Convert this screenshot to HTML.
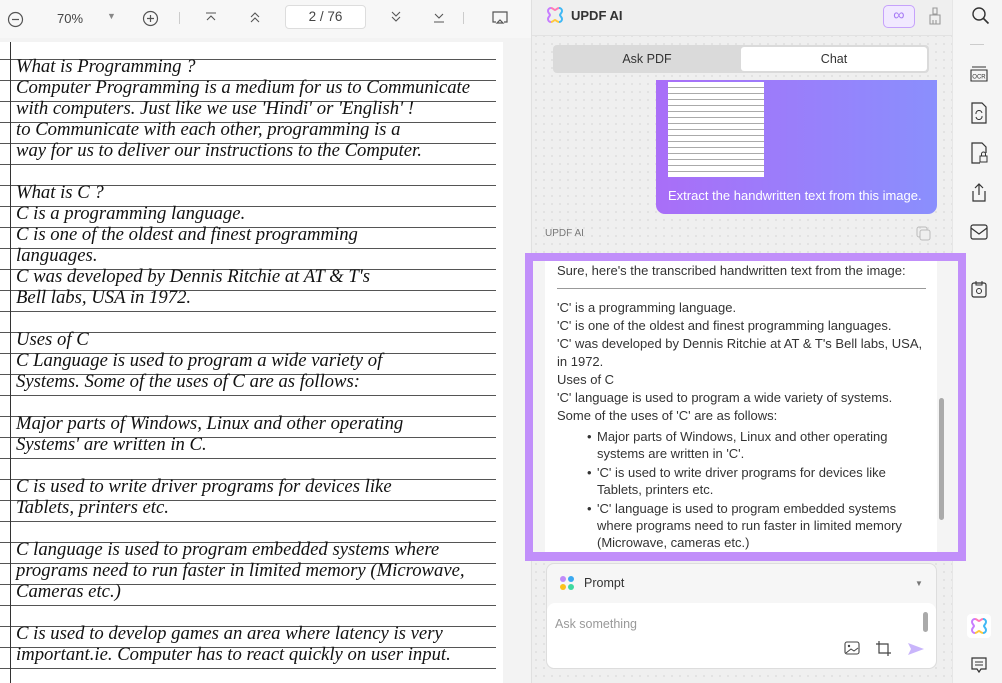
<!DOCTYPE html>
<html><head><meta charset="utf-8"><style>
*{margin:0;padding:0;box-sizing:border-box}
body{width:1002px;height:683px;overflow:hidden;position:relative;background:#f0f0f0;font-family:"Liberation Sans","Noto Sans CJK SC",sans-serif;}
.abs{position:absolute}
#left{left:0;top:0;width:531px;height:683px;background:#f3f3f3}
#tb{left:0;top:0;width:531px;height:38px;background:#f7f7f7;font-size:13px;color:#444}
#page{left:0;top:42px;width:503px;height:641px;background:#fff}
#rules{left:0;top:0;width:496px;height:641px;background-image:repeating-linear-gradient(to bottom,transparent 0,transparent 17px,#555 17px,#555 18px,transparent 18px,transparent 21px);}
#page .vl{left:10px;top:0;width:1px;height:641px;background:#333}
.hw{position:absolute;left:16px;font-family:"Liberation Serif",serif;font-style:italic;font-size:18.7px;color:#111;white-space:nowrap}
#sep{left:531px;top:0;width:1px;height:683px;background:#e0e0e0}
#right{left:532px;top:0;width:420px;height:683px;background-color:#efefef;background-image:radial-gradient(#dedede 0.8px,transparent 1px);background-size:8px 8px}
#rbar{left:952px;top:0;width:50px;height:683px;background:#f5f5f5;border-left:1px solid #e6e6e6}
.ic{position:absolute}
.resp{font-size:13px;color:#333;line-height:18px}
</style></head><body>
<div id="left" class="abs"></div>
<div id="tb" class="abs">
 <svg class="ic" style="left:7px;top:11px" width="17" height="17"><circle cx="8.5" cy="8.5" r="7" fill="none" stroke="#555" stroke-width="1.2"/><path d="M5 8.5h7" stroke="#555" stroke-width="1.2"/></svg>
 <div class="abs" style="left:57px;top:11px">70%</div>
 <div class="abs" style="left:107px;top:11px;font-size:9px;color:#888">▼</div>
 <svg class="ic" style="left:142px;top:10px" width="17" height="17"><circle cx="8.5" cy="8.5" r="7" fill="none" stroke="#555" stroke-width="1.2"/><path d="M5 8.5h7M8.5 5v7" stroke="#555" stroke-width="1.2"/></svg>
 <div class="abs" style="left:179px;top:12px;width:1px;height:12px;background:#ccc"></div>
 <svg class="ic" style="left:204px;top:11px" width="14" height="14"><path d="M2 2h10M3 9l4-4 4 4" fill="none" stroke="#555" stroke-width="1.1"/></svg>
 <svg class="ic" style="left:248px;top:10px" width="14" height="14"><path d="M3 7l4-4 4 4M3 12l4-4 4 4" fill="none" stroke="#555" stroke-width="1.1"/></svg>
 <div class="abs" style="left:285px;top:5px;width:81px;height:24px;border:1px solid #ddd;border-radius:4px;background:#fff;text-align:center;line-height:22px;font-size:13.5px">2 / 76</div>
 <svg class="ic" style="left:389px;top:10px" width="14" height="14"><path d="M3 2l4 4 4-4M3 7l4 4 4-4" fill="none" stroke="#555" stroke-width="1.1"/></svg>
 <svg class="ic" style="left:432px;top:11px" width="14" height="14"><path d="M3 3l4 4 4-4M2 11h10" fill="none" stroke="#555" stroke-width="1.1"/></svg>
 <div class="abs" style="left:463px;top:12px;width:1px;height:12px;background:#ccc"></div>
 <svg class="ic" style="left:491px;top:10px" width="18" height="16"><path d="M5 12H2V2h14v10h-3M6 13l3-3 3 3z" fill="none" stroke="#555" stroke-width="1.2"/></svg>
</div>
<div id="page" class="abs"><div id="rules" class="abs"></div><div class="vl abs"></div>
<div class="hw" style="top:14px">What is Programming ?</div>
<div class="hw" style="top:35px">Computer Programming is a medium for us to Communicate</div>
<div class="hw" style="top:56px">with computers. Just like we use 'Hindi' or 'English' !</div>
<div class="hw" style="top:77px">to Communicate with each other, programming is a</div>
<div class="hw" style="top:98px">way for us to deliver our instructions to the Computer.</div>
<div class="hw" style="top:140px">What is C ?</div>
<div class="hw" style="top:161px">C is a programming language.</div>
<div class="hw" style="top:182px">C is one of the oldest and finest programming</div>
<div class="hw" style="top:203px">languages.</div>
<div class="hw" style="top:224px">C was developed by Dennis Ritchie at AT &amp; T's</div>
<div class="hw" style="top:245px">Bell labs, USA in 1972.</div>
<div class="hw" style="top:287px">Uses of C</div>
<div class="hw" style="top:308px">C Language is used to program a wide variety of</div>
<div class="hw" style="top:329px">Systems. Some of the uses of C are as follows:</div>
<div class="hw" style="top:371px">Major parts of Windows, Linux and other operating</div>
<div class="hw" style="top:392px">Systems' are written in C.</div>
<div class="hw" style="top:434px">C is used to write driver programs for devices like</div>
<div class="hw" style="top:455px">Tablets, printers etc.</div>
<div class="hw" style="top:497px">C language is used to program embedded systems where</div>
<div class="hw" style="top:518px">programs need to run faster in limited memory (Microwave,</div>
<div class="hw" style="top:539px">Cameras etc.)</div>
<div class="hw" style="top:581px">C is used to develop games an area where latency is very</div>
<div class="hw" style="top:602px">important.ie. Computer has to react quickly on user input.</div>
</div>
<div id="sep" class="abs"></div>
<div id="right" class="abs"></div>
<div id="rbar" class="abs"></div>
<div class="abs" style="left:532px;top:0;width:420px;height:36px;background:#efefef;border-bottom:1px solid #e2e2e2"></div>
<svg class="ic" style="left:546px;top:6px" width="18" height="18" viewBox="0 0 18 18"><path d="M5 2a3 3 0 0 0-3 3c0 2 2 3 2 4s-2 2-2 4a3 3 0 0 0 3 3" fill="none" stroke="#c77dff" stroke-width="2"/><path d="M13 2a3 3 0 0 1 3 3c0 2-2 3-2 4s2 2 2 4a3 3 0 0 1-3 3" fill="none" stroke="#3fb8f5" stroke-width="2"/><path d="M5 2c2 0 3 2 4 2s2-2 4-2" fill="none" stroke="#ff7ab6" stroke-width="2"/><path d="M5 16c2 0 3-2 4-2s2 2 4 2" fill="none" stroke="#ffc83d" stroke-width="2"/></svg>
<div class="abs" style="left:571px;top:8px;font-size:13px;font-weight:bold;color:#333">UPDF AI</div>
<div class="abs" style="left:883px;top:5px;width:32px;height:23px;border:1px solid #c6a2fb;border-radius:5px;background:#f1e9ff;color:#a77bf5;text-align:center;font-size:16px;line-height:20px">∞</div>
<svg class="ic" style="left:928px;top:7px" width="14" height="18"><path d="M5 1h4v6H5zM2 8h10v9H2zM5 13v4M8 13v4" fill="none" stroke="#999" stroke-width="1.1"/></svg>
<div class="abs" style="left:553px;top:45px;width:376px;height:28px;background:#dadada;border-radius:4px"></div>
<div class="abs" style="left:741px;top:47px;width:186px;height:24px;background:#fff;border-radius:3px"></div>
<div class="abs" style="left:553px;top:52px;width:188px;text-align:center;font-size:12.5px;color:#333">Ask PDF</div>
<div class="abs" style="left:741px;top:52px;width:186px;text-align:center;font-size:12.5px;color:#333">Chat</div>
<div class="abs" style="left:656px;top:80px;width:281px;height:134px;border-radius:0 0 9px 9px;background:linear-gradient(90deg,#a96ef8,#8a8ffd)"></div>
<div class="abs" style="left:668px;top:82px;width:96px;height:95px;background:#fff;background-image:repeating-linear-gradient(to bottom,transparent 0,transparent 5px,#aaa 5px,#aaa 6px)"></div>
<div class="abs" style="left:668px;top:188px;font-size:13px;color:#fff">Extract the handwritten text from this image.</div>
<div class="abs" style="left:545px;top:228px;font-size:10px;color:#777">UPDF AI</div>
<svg class="ic" style="left:916px;top:226px" width="16" height="16"><rect x="1" y="1" width="10" height="10" rx="2" fill="none" stroke="#bbb"/><rect x="4" y="4" width="10" height="10" rx="2" fill="#efefef" stroke="#bbb"/></svg>
<div class="abs" style="left:525px;top:253px;width:441px;height:308px;background:#c18ffa"></div>
<div class="abs" style="left:533px;top:261px;width:425px;height:291px;background:#f4f4f4"></div>
<div class="abs" style="left:545px;top:261px;width:392px;height:291px;background:#fff"></div>
<div class="abs" style="left:939px;top:398px;width:5px;height:122px;background:#aaa;border-radius:3px"></div>
<div class="abs resp" style="left:557px;top:262px">Sure, here's the transcribed handwritten text from the image:</div>
<div class="abs" style="left:557px;top:288px;width:369px;height:1px;background:#999"></div>
<div class="abs resp" style="left:557px;top:299px;width:372px">'C' is a programming language.<br>'C' is one of the oldest and finest programming languages.<br>'C' was developed by Dennis Ritchie at AT &amp; T's Bell labs, USA, in 1972.<br>Uses of C<br>'C' language is used to program a wide variety of systems. Some of the uses of 'C' are as follows:</div>
<div class="abs resp" style="left:597px;top:428px;width:330px;line-height:17px">
<div style="position:relative;margin-bottom:2px"><span style="position:absolute;left:-10px">•</span>Major parts of Windows, Linux and other operating systems are written in 'C'.</div>
<div style="position:relative;margin-bottom:2px"><span style="position:absolute;left:-10px">•</span>'C' is used to write driver programs for devices like Tablets, printers etc.</div>
<div style="position:relative"><span style="position:absolute;left:-10px">•</span>'C' language is used to program embedded systems where programs need to run faster in limited memory (Microwave, cameras etc.)</div>
</div>
<div class="abs" style="left:546px;top:563px;width:391px;height:106px;border:1px solid #ddd;border-radius:8px;background:#f6f6f6"></div>
<div class="abs" style="left:547px;top:603px;width:389px;height:65px;background:#fff;border-radius:8px"></div>
<svg class="ic" style="left:559px;top:575px" width="16" height="16"><circle cx="4" cy="4" r="3" fill="#c08cf9"/><circle cx="12" cy="4" r="3" fill="#3aa9f0"/><circle cx="4" cy="12" r="3" fill="#fbc21c"/><circle cx="12" cy="12" r="3" fill="#3ed9a0"/></svg>
<div class="abs" style="left:584px;top:576px;font-size:12.5px;color:#333">Prompt</div>
<div class="abs" style="left:915px;top:579px;font-size:8px;color:#777">▼</div>
<div class="abs" style="left:555px;top:617px;font-size:12.5px;color:#999">Ask something</div>
<div class="abs" style="left:923px;top:612px;width:5px;height:20px;background:#aaa;border-radius:3px"></div>
<svg class="ic" style="left:844px;top:641px" width="16" height="14"><rect x="1" y="1" width="14" height="12" rx="2" fill="none" stroke="#444" stroke-width="1.1"/><path d="M2 12l5-4 3 2 4-3" fill="none" stroke="#444"/><circle cx="5" cy="5" r="1.2" fill="#444"/></svg>
<svg class="ic" style="left:875px;top:640px" width="17" height="17"><path d="M4 1v12h12M1 4h12v12" fill="none" stroke="#444" stroke-width="1.2"/></svg>
<svg class="ic" style="left:907px;top:642px" width="18" height="14"><path d="M1 1l16 6-16 6 3-6z" fill="#c9b5fb"/></svg>
<svg class="ic" style="left:971px;top:6px" width="19" height="19"><circle cx="8" cy="8" r="6" fill="none" stroke="#333" stroke-width="1.4"/><path d="M12.5 12.5l5 5" stroke="#333" stroke-width="1.6"/></svg>
<div class="abs" style="left:970px;top:44px;width:14px;height:1px;background:#ccc"></div>
<svg class="ic" style="left:969px;top:63px" width="20" height="20"><path d="M3 4h14M2 7h16v11H2z" fill="none" stroke="#333" stroke-width="1.1"/><text x="3.3" y="15.5" font-size="6" font-family="Liberation Sans" fill="#333">OCR</text></svg>
<svg class="ic" style="left:970px;top:102px" width="18" height="22"><path d="M2 1h10l4 4v16H2z" fill="none" stroke="#333" stroke-width="1.2"/><path d="M6 12a3 3 0 0 1 6-1M12 14a3 3 0 0 1-6 1" fill="none" stroke="#333"/></svg>
<svg class="ic" style="left:970px;top:142px" width="18" height="22"><path d="M10 21H2V1h10l4 4v6" fill="none" stroke="#333" stroke-width="1.2"/><rect x="10" y="14" width="7" height="6" fill="none" stroke="#333"/><path d="M11.5 14v-2a2 2 0 0 1 4 0v2" fill="none" stroke="#333"/></svg>
<svg class="ic" style="left:970px;top:182px" width="18" height="20"><path d="M9 13V2M5 6l4-4 4 4M3 9v10h12V9" fill="none" stroke="#333" stroke-width="1.2"/></svg>
<svg class="ic" style="left:970px;top:224px" width="18" height="16"><rect x="1" y="1" width="16" height="14" rx="2" fill="none" stroke="#333" stroke-width="1.2"/><path d="M1 4l8 6 8-6" fill="none" stroke="#333" stroke-width="1.2"/></svg>
<svg class="ic" style="left:971px;top:280px" width="16" height="18"><rect x="1" y="3" width="14" height="14" rx="2" fill="none" stroke="#333" stroke-width="1.2"/><path d="M5 1v4h6V1" fill="none" stroke="#333"/><circle cx="8" cy="11" r="2.5" fill="none" stroke="#333"/></svg>
<div class="abs" style="left:967px;top:614px;width:24px;height:24px;background:#fff;border-radius:4px"></div>
<svg class="ic" style="left:970px;top:617px" width="18" height="18" viewBox="0 0 18 18"><path d="M5 2a3 3 0 0 0-3 3c0 2 2 3 2 4s-2 2-2 4a3 3 0 0 0 3 3" fill="none" stroke="#c77dff" stroke-width="2"/><path d="M13 2a3 3 0 0 1 3 3c0 2-2 3-2 4s2 2 2 4a3 3 0 0 1-3 3" fill="none" stroke="#3fb8f5" stroke-width="2"/><path d="M5 2c2 0 3 2 4 2s2-2 4-2" fill="none" stroke="#ff7ab6" stroke-width="2"/><path d="M5 16c2 0 3-2 4-2s2 2 4 2" fill="none" stroke="#ffc83d" stroke-width="2"/></svg>
<svg class="ic" style="left:971px;top:657px" width="16" height="18"><path d="M1 1h14v11h-5l-2 3-2-3H1z" fill="none" stroke="#333" stroke-width="1.2"/><path d="M4 5h8M4 8h8" stroke="#333"/></svg>
</body></html>
